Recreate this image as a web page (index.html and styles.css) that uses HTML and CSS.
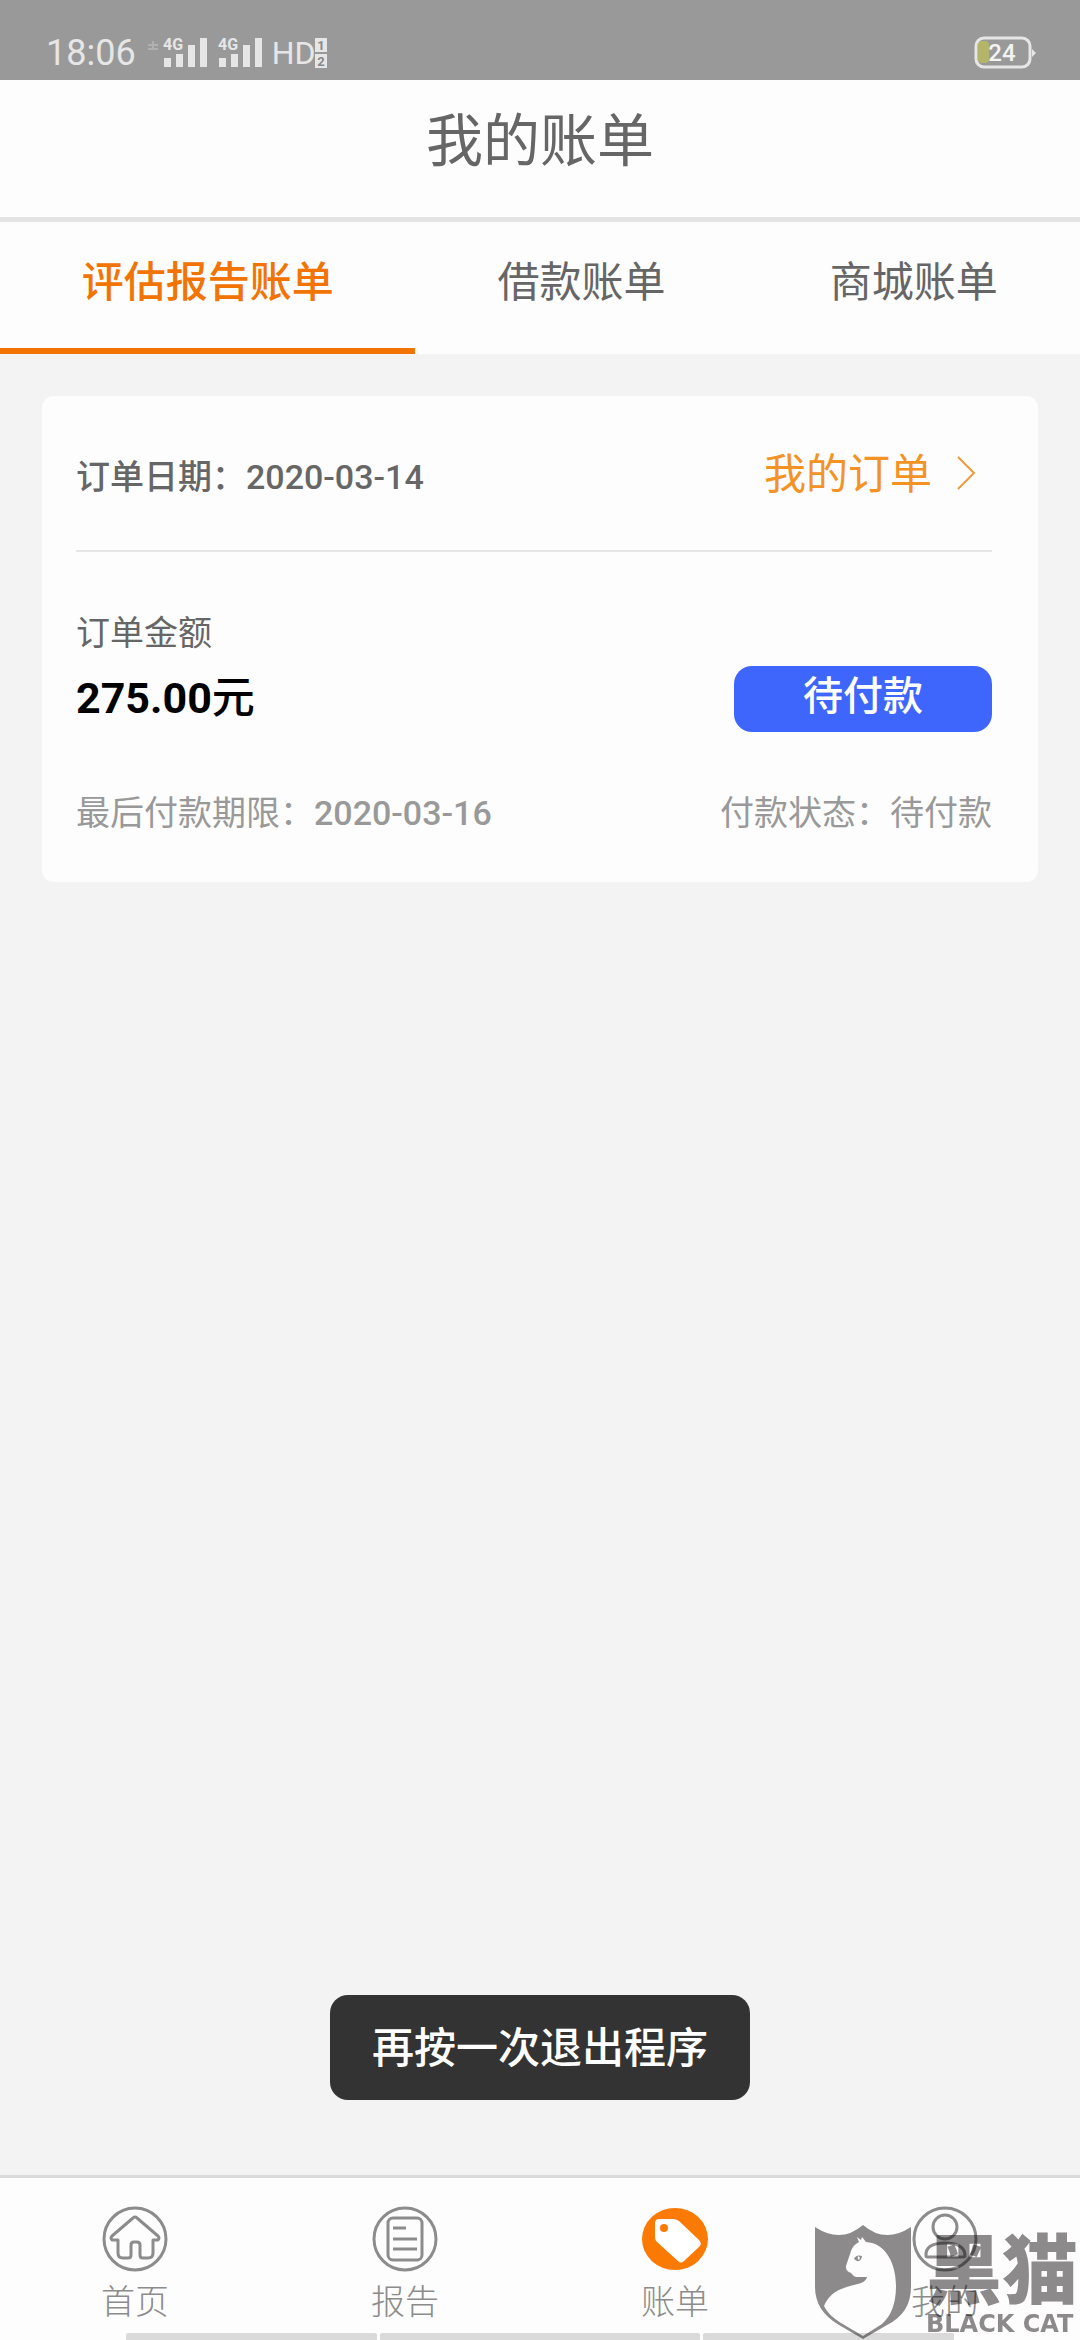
FILE: index.html
```html
<!DOCTYPE html>
<html lang="zh-CN">

<head>
    <meta charset="UTF-8" />
    <meta name="viewport" content="width=device-width, initial-scale=1.0" />
    <title>我的账单</title>
    <link rel="stylesheet" href="styles.css">
</head>

<body>
    <div class="status-bar">
        <span class="time">18:06</span>
        <svg class="signals" width="124" height="36" viewBox="0 0 124 36" fill="#e6e6e6">
            <path d="M0 10h10M0 14h10M5 6v8" stroke="#b0b0b0" stroke-width="2" />
            <text x="15" y="15" class="net">4G</text>
            <rect x="16" y="23" width="7" height="9" />
            <rect x="28" y="19" width="7" height="13" />
            <rect x="40" y="10" width="7" height="22" />
            <rect x="52" y="3" width="7" height="29" />
            <text x="70" y="15" class="net">4G</text>
            <rect x="71" y="23" width="7" height="9" />
            <rect x="83" y="19" width="7" height="13" />
            <rect x="95" y="10" width="7" height="22" />
            <rect x="107" y="3" width="7" height="29" />
        </svg>
        <span class="hd">HD</span>
        <svg class="sims" width="12" height="36" viewBox="0 0 12 36">
            <rect y="3" width="12" height="14" fill="#e6e6e6" />
            <rect y="19" width="12" height="14" fill="#e6e6e6" />
            <text x="6" y="15" class="sim">1</text>
            <text x="6" y="31" class="sim">2</text>
        </svg>
        <svg class="battery" width="62" height="36" viewBox="0 0 62 36">
            <rect x="4" y="6" width="11" height="22" rx="4" fill="#b5b56a" />
            <rect x="2" y="3" width="54" height="29" rx="8" fill="none" stroke="#e6e6e6" stroke-width="3" />
            <path d="M58 14l4 4-4 4z" fill="#e6e6e6" />
            <text x="28" y="26" class="level">24</text>
        </svg>
    </div>

    <header class="header">
        <h1>我的账单</h1>
    </header>

    <div class="tabs">
        <button class="tab active">评估报告账单</button>
        <button class="tab">借款账单</button>
        <button class="tab">商城账单</button>
    </div>

    <main class="content">
        <div class="card">
            <div class="card-head">
                <span class="date">订单日期：2020-03-14</span>
                <a href="#" class="order-link">
                    <span>我的订单</span>
                    <svg width="20" height="34" viewBox="0 0 20 34" fill="none" stroke="#f0983c" stroke-width="2">
                        <path d="M2 1l16 16L2 33" />
                    </svg>
                </a>
            </div>
            <div class="card-body">
                <div class="money">
                    <span class="money-label">订单金额</span>
                    <span class="amount">275.00<span class="unit">元</span></span>
                </div>
                <button class="pay">待付款</button>
            </div>
            <div class="card-foot">
                <span>最后付款期限：<span class="limit">2020-03-16</span></span>
                <span>付款状态：待付款</span>
            </div>
        </div>
    </main>

    <div class="toast">再按一次退出程序</div>

    <footer class="footer">
        <nav class="nav">
            <a href="#" class="nav-item">
                <svg width="66" height="66" viewBox="0 0 66 66" fill="none" stroke="#8c8c8c" stroke-width="3" stroke-linejoin="round">
                    <circle cx="33" cy="33" r="31" />
                    <path d="M31 12q2-2 4 0l21 18q2 2 0 4h-5v13q0 5-5 5h-5q-3 0-3-3V39q0-3-3-3h-3q-3 0-3 3v10q0 3-3 3h-5q-5 0-5-5V34h-6q-2-2 0-4z" />
                </svg>
                <span>首页</span>
            </a>
            <a href="#" class="nav-item">
                <svg width="66" height="66" viewBox="0 0 66 66" fill="none" stroke="#8c8c8c" stroke-width="3">
                    <circle cx="33" cy="33" r="31" />
                    <rect x="16" y="12" width="34" height="42" rx="5" />
                    <path d="M21 22h13M21 33h24M21 43h24" />
                </svg>
                <span>报告</span>
            </a>
            <a href="#" class="nav-item">
                <svg width="66" height="66" viewBox="0 0 66 66">
                    <ellipse cx="33" cy="33" rx="33" ry="31" fill="#fb7a04" />
                    <path d="M13 17q0-4 4-4h14q3 0 6 2l20 19q3 3 1 6L42 55q-3 3-6 0L15 36q-2-2-2-5z" fill="#fff" />
                    <circle cx="22" cy="22" r="4" fill="#fb7a04" />
                </svg>
                <span>账单</span>
            </a>
            <a href="#" class="nav-item">
                <svg width="66" height="66" viewBox="0 0 66 66" fill="none" stroke="#8c8c8c" stroke-width="3">
                    <circle cx="33" cy="33" r="31" />
                    <circle cx="33" cy="21" r="12" />
                    <path d="M14 50q-1-13 19-13t20 13q0 1-2 1H16q-2 0-2-1z" />
                </svg>
                <span>我的</span>
            </a>
        </nav>
        <div class="keys">
            <i></i><i></i><i></i>
        </div>

        <div class="mark">
            <svg width="98" height="116" viewBox="0 0 98 116">
                <path d="M1 3Q27 20 49 1q22 19 48 2v60q0 26-24 38L49 115 25 101Q1 87 1 63z" fill="#8e8b8c" />
                <path d="M49 112L27 99Q14 91 10 82C18 63 36 63 47 59Q52 57 53 53H42q-3-1-5-4-6-2-5-7l5-15q2-6 8-9l-2-5 4 3 1-3 4 5C72 19 82 40 82 62 82 80 77 92 68 100z" fill="#fff" />
                <path d="M40 35q2-5 8-3-1 6-5 5z" fill="#8e8b8c" />
                <path d="M44 32q3 1 1 4-2-1-1-4z" fill="#fff" />
            </svg>
            <div class="mark-text">
                <span class="mark-cn">黑猫</span>
                <span class="mark-en">BLACK CAT</span>
            </div>
        </div>
    </footer>
</body>

</html>
```

FILE: styles.css
```css
* {
    box-sizing: border-box;
}

body {
    display: flex;
    flex-direction: column;
    min-height: 100vh;
    margin: 0;
    background: #f3f3f3;
    color: #666;
    font-family: Roboto, "Noto Sans CJK SC", sans-serif;
    font-size: 34px;
}

a {
    color: inherit;
    text-decoration: none;
}

button {
    padding: 0;
    border: none;
    font-family: inherit;
}

/* status bar */
.status-bar {
    display: flex;
    align-items: center;
    height: 80px;
    padding: 26px 44px 0 46px;
    background: #999;
    color: #e6e6e6;
}

.time {
    font-size: 36px;
}

.signals {
    margin-left: 12px;
}

.net {
    font-size: 16px;
    font-weight: bold;
}

.hd {
    font-size: 32px;
}

.sim {
    fill: #888;
    font-size: 13px;
    font-weight: bold;
    text-anchor: middle;
}

.battery {
    margin-left: auto;
}

.level {
    fill: #f3f3f3;
    font-size: 24px;
    font-weight: 500;
    text-anchor: middle;
}

/* title */
.header {
    height: 142px;
    border-bottom: 5px solid #e4e4e4;
    background: #fdfdfd;
    text-align: center;
}

.header h1 {
    margin: 0;
    font-size: 57px;
    font-weight: normal;
    line-height: 124px;
}

/* tabs */
.tabs {
    display: flex;
    height: 132px;
    background: #fdfdfd;
}

.tab {
    flex: 4;
    padding-bottom: 14px;
    border-bottom: 6px solid transparent;
    background: none;
    color: #666;
    font-size: 42px;
}

.tab.active {
    flex: 5;
    border-color: #f17404;
    color: #f17404;
    font-weight: 500;
}

/* order card */
.content {
    flex: 1;
    padding: 42px 42px 40px;
}

.card {
    padding: 0 46px 0 34px;
    border-radius: 12px;
    background: #fdfdfd;
}

.card-head {
    display: flex;
    align-items: center;
    justify-content: space-between;
    height: 156px;
    padding-right: 16px;
    border-bottom: 2px solid #e6e6e6;
}

.date {
    padding-top: 2px;
    font-weight: 500;
}

.order-link {
    display: flex;
    align-items: center;
    gap: 24px;
    color: #f39325;
    font-size: 42px;
}

.order-link span {
    padding-bottom: 6px;
}

.card-body {
    display: flex;
    align-items: flex-end;
    justify-content: space-between;
    padding-top: 56px;
}

.money {
    display: flex;
    flex-direction: column;
}

.money-label {
    line-height: 50px;
}

.amount {
    color: #000;
    font-size: 43px;
    font-weight: bold;
    line-height: 80px;
}

.unit {
    font-weight: 500;
}

.pay {
    width: 258px;
    height: 66px;
    margin-bottom: 6px;
    padding-bottom: 4px;
    border-radius: 18px;
    background: #3e66fc;
    color: #fff;
    font-size: 40px;
    font-weight: 500;
    line-height: 62px;
}

.card-foot {
    display: flex;
    justify-content: space-between;
    padding: 50px 0 44px;
    color: #999;
    line-height: 50px;
}

.limit {
    font-weight: 500;
}

/* toast */
.toast {
    position: fixed;
    bottom: 240px;
    left: 50%;
    padding: 2px 42px 0;
    border-radius: 18px;
    background: #333;
    color: #fff;
    font-size: 42px;
    font-weight: 500;
    line-height: 103px;
    white-space: nowrap;
    transform: translateX(-50%);
}

/* bottom navigation */
.footer {
    position: relative;
    border-top: 3px solid #dadada;
    background: #fdfdfd;
}

.nav {
    display: flex;
    height: 155px;
    padding-top: 28px;
}

.nav-item {
    display: flex;
    flex: 1;
    flex-direction: column;
    align-items: center;
    gap: 4px;
    color: #8c8c8c;
    font-weight: 300;
    line-height: 52px;
}

.keys {
    display: grid;
    grid-template-columns: 252fr 320fr 252fr;
    gap: 3px;
    height: 7px;
    margin: 0 126px;
}

.keys i {
    border-radius: 2px 2px 0 0;
    background: #dadada;
}

/* watermark over the last item */
.mark {
    position: absolute;
    right: 2px;
    bottom: 0;
    display: flex;
    align-items: flex-end;
    gap: 14px;
    color: #8e8b8c;
    mix-blend-mode: multiply;
}

.mark-text {
    display: flex;
    flex-direction: column;
}

.mark-cn {
    font-size: 76px;
    font-weight: 900;
    line-height: 72px;
}

.mark-en {
    font-family: "DejaVu Sans", sans-serif;
    font-size: 24px;
    font-weight: bold;
    line-height: 32px;
}
```
